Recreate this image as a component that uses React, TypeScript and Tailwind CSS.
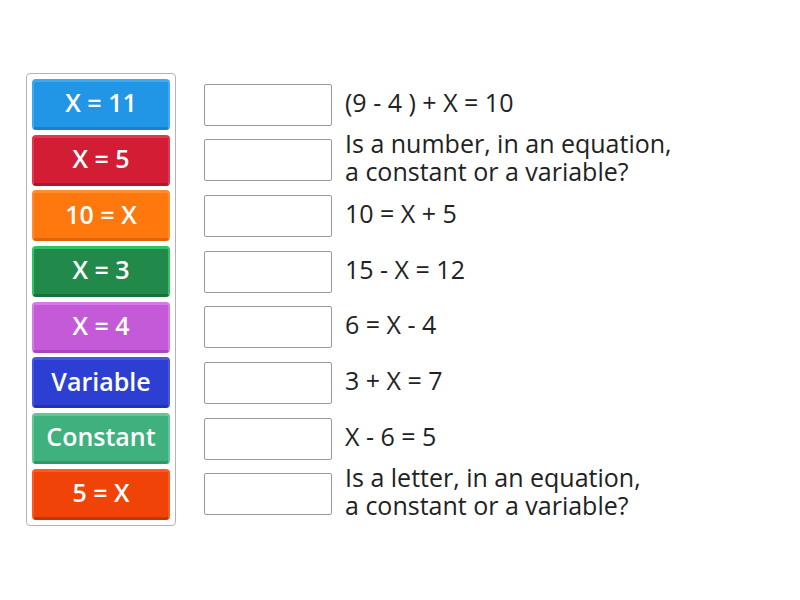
const tiles = [
  { label: "X = 11", cls: "bg-[#2196e6] border-[#3eaaf2] border-b-[#1a7fcc]" },
  { label: "X = 5", cls: "bg-[#d21d35] border-[#e0384f] border-b-[#b0162b]" },
  { label: "10 = X", cls: "bg-[#ff780e] border-[#ff8c2e] border-b-[#e0640a]" },
  { label: "X = 3", cls: "bg-[#218a4b] border-[#2ec463] border-b-[#1a703c]" },
  { label: "X = 4", cls: "bg-[#c45ad8] border-[#d67ae6] border-b-[#a845bc]" },
  { label: "Variable", cls: "bg-[#2d3fd3] border-[#4656e2] border-b-[#2232b4]" },
  { label: "Constant", cls: "bg-[#3fb17e] border-[#5cc996] border-b-[#32976a]" },
  { label: "5 = X", cls: "bg-[#f04307] border-[#ff5a22] border-b-[#c83504]" },
];

const prompts = [
  ["(9 - 4 ) + X = 10"],
  ["Is a number, in an equation,", "a constant or a variable?"],
  ["10 = X + 5"],
  ["15 - X = 12"],
  ["6 = X - 4"],
  ["3 + X = 7"],
  ["X - 6 = 5"],
  ["Is a letter, in an equation,", "a constant or a variable?"],
];

export default function App() {
  return (
    <div className="w-[800px] h-[600px] bg-white font-['Open_Sans',sans-serif] flex items-start pt-[73px] pl-[26px]">
      <div className="w-[150px] border border-[#b4b4b4] rounded-[4px] p-[5px] flex flex-col gap-[4.7px]">
        {tiles.map((t) => (
          <div
            key={t.label}
            className={`h-[51px] rounded-[4px] border-x-2 border-t-[3px] border-b-[3px] flex items-center justify-center pb-[3px] text-white text-[25px] font-semibold ${t.cls}`}
          >
            {t.label}
          </div>
        ))}
      </div>

      <div className="ml-[28px] pt-[6px] flex flex-col gap-[4.7px]">
        {prompts.map((lines, i) => (
          <div key={i} className="h-[51px] flex items-center">
            <div className="w-[128px] h-[42px] border border-[#9a9a9a] rounded-[2px] bg-white shrink-0" />
            <div className="ml-[13px] pb-[6px] text-[25px] leading-[28px] text-[#222] whitespace-nowrap">
              {lines.map((l) => (
                <div key={l}>{l}</div>
              ))}
            </div>
          </div>
        ))}
      </div>
    </div>
  );
}
